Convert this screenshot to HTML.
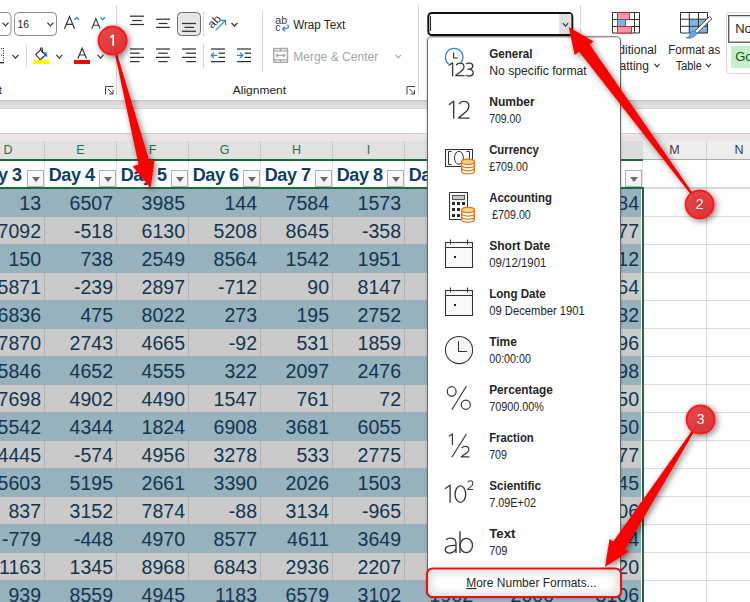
<!DOCTYPE html><html><head><meta charset="utf-8"><style>
*{margin:0;padding:0;box-sizing:border-box}
html,body{width:750px;height:602px;overflow:hidden;background:#fff;font-family:"Liberation Sans",sans-serif}
.a{position:absolute}
.sep{position:absolute;width:1px;background:#d4d4d4}
.rib{color:#262626;font-size:12px;white-space:nowrap}
.cell{position:absolute;text-align:right;font-size:19.5px;color:#0f3651;padding-right:4px;line-height:28px;white-space:nowrap;overflow:hidden}
.hd{position:absolute;top:141px;height:18px;background:#e1e1e1;border-right:1px solid #c8c8c8;color:#217346;font-size:12.5px;text-align:center;line-height:19.5px}
.th{position:absolute;top:161px;height:26px;background:#fff;border-right:1px solid #e4e4e4;color:#0f3f63;font-weight:bold;font-size:18px;line-height:28.5px;letter-spacing:-0.45px;white-space:nowrap;overflow:hidden}
.fb{position:absolute;width:17px;height:17px;border:1px solid #b3b3b3;background:linear-gradient(#fdfdfd,#eef0f3)}
.fb:after{content:"";position:absolute;left:4px;top:6px;border-left:4px solid transparent;border-right:4px solid transparent;border-top:5px solid #6b6b6b}
.mi{position:absolute;left:489px;color:#262626;white-space:nowrap}
.mt{font-weight:bold;font-size:12px;line-height:14px}
.ms{font-size:12px;line-height:14px;margin-top:3px}
</style></head><body>
<div class="a" style="left:0;top:100px;width:750px;height:9px;background:linear-gradient(#c9c4c4 0,#c9c4c4 1px,#d9d4d4 1px,#e9e5e5 8px,#d2d2d2 8px)"></div>
<div class="a" style="left:0;top:133px;width:750px;height:8px;background:linear-gradient(#d0d0d0 0,#d0d0d0 1px,#ede5e5 1px)"></div>
<div class="hd" style="left:-28px;width:73px">D</div>
<div class="hd" style="left:45px;width:72px">E</div>
<div class="hd" style="left:117px;width:72px">F</div>
<div class="hd" style="left:189px;width:72px">G</div>
<div class="hd" style="left:261px;width:72px">H</div>
<div class="hd" style="left:333px;width:72px">I</div>
<div class="hd" style="left:405px;width:72px">J</div>
<div class="hd" style="left:477px;width:72px">K</div>
<div class="hd" style="left:549px;width:94px">L</div>
<div class="a" style="left:621px;top:141px;width:22px;height:18px;background:#dcdcdc"></div>
<div class="a" style="left:643px;top:141px;width:107px;height:19px;background:#ededed;border-bottom:1px solid #ababab"></div>
<div class="a" style="left:643px;top:141px;width:64px;height:18px;border-right:1px solid #d0d0d0;color:#3a3a4a;font-size:12.5px;text-align:center;line-height:19.5px">M</div>
<div class="a" style="left:707px;top:141px;width:64px;height:18px;color:#3a3a4a;font-size:12.5px;text-align:center;line-height:19.5px">N</div>
<div class="a" style="left:0;top:159px;width:643px;height:2px;background:#1d6b3a"></div>
<div class="a" style="left:706px;top:160px;width:1px;height:442px;background:#dadada"></div>
<div class="a" style="left:643px;top:188px;width:107px;height:1px;background:#dadada"></div>
<div class="a" style="left:643px;top:216px;width:107px;height:1px;background:#dadada"></div>
<div class="a" style="left:643px;top:244px;width:107px;height:1px;background:#dadada"></div>
<div class="a" style="left:643px;top:272px;width:107px;height:1px;background:#dadada"></div>
<div class="a" style="left:643px;top:300px;width:107px;height:1px;background:#dadada"></div>
<div class="a" style="left:643px;top:328px;width:107px;height:1px;background:#dadada"></div>
<div class="a" style="left:643px;top:356px;width:107px;height:1px;background:#dadada"></div>
<div class="a" style="left:643px;top:384px;width:107px;height:1px;background:#dadada"></div>
<div class="a" style="left:643px;top:412px;width:107px;height:1px;background:#dadada"></div>
<div class="a" style="left:643px;top:440px;width:107px;height:1px;background:#dadada"></div>
<div class="a" style="left:643px;top:468px;width:107px;height:1px;background:#dadada"></div>
<div class="a" style="left:643px;top:496px;width:107px;height:1px;background:#dadada"></div>
<div class="a" style="left:643px;top:524px;width:107px;height:1px;background:#dadada"></div>
<div class="a" style="left:643px;top:552px;width:107px;height:1px;background:#dadada"></div>
<div class="a" style="left:643px;top:580px;width:107px;height:1px;background:#dadada"></div>
<div class="a" style="left:643px;top:187px;width:107px;height:1px;background:#dadada"></div>
<div class="th" style="left:-28px;width:73px;padding-left:3.8px">Day 3</div>
<div class="fb" style="left:27px;top:170px"></div>
<div class="th" style="left:45px;width:72px;padding-left:3.8px">Day 4</div>
<div class="fb" style="left:99px;top:170px"></div>
<div class="th" style="left:117px;width:72px;padding-left:3.8px">Day 5</div>
<div class="fb" style="left:171px;top:170px"></div>
<div class="th" style="left:189px;width:72px;padding-left:3.8px">Day 6</div>
<div class="fb" style="left:243px;top:170px"></div>
<div class="th" style="left:261px;width:72px;padding-left:3.8px">Day 7</div>
<div class="fb" style="left:315px;top:170px"></div>
<div class="th" style="left:333px;width:72px;padding-left:3.8px">Day 8</div>
<div class="fb" style="left:387px;top:170px"></div>
<div class="th" style="left:405px;width:72px;padding-left:3.8px">Day 9</div>
<div class="fb" style="left:459px;top:170px"></div>
<div class="th" style="left:477px;width:72px;padding-left:3.8px">Day 10</div>
<div class="fb" style="left:531px;top:170px"></div>
<div class="th" style="left:549px;width:94px;padding-left:3.8px">Day 11</div>
<div class="fb" style="left:625px;top:170px"></div>
<div class="a" style="left:0;top:187px;width:643px;height:2px;background:#1d6b3a"></div>
<div class="a" style="left:0;top:189px;width:641px;height:413px;background:#cacaca"></div><div class="a" style="left:641px;top:189px;width:1px;height:413px;background:#fff"></div>
<div class="a" style="left:0;top:189px;width:641px;height:28px;background:#97b1bd"></div>
<div class="a" style="left:44px;top:217px;width:1px;height:27px;background:#b3b3b3"></div>
<div class="a" style="left:116px;top:217px;width:1px;height:27px;background:#b3b3b3"></div>
<div class="a" style="left:188px;top:217px;width:1px;height:27px;background:#b3b3b3"></div>
<div class="a" style="left:260px;top:217px;width:1px;height:27px;background:#b3b3b3"></div>
<div class="a" style="left:332px;top:217px;width:1px;height:27px;background:#b3b3b3"></div>
<div class="a" style="left:404px;top:217px;width:1px;height:27px;background:#b3b3b3"></div>
<div class="a" style="left:476px;top:217px;width:1px;height:27px;background:#b3b3b3"></div>
<div class="a" style="left:548px;top:217px;width:1px;height:27px;background:#b3b3b3"></div>
<div class="a" style="left:0;top:244px;width:641px;height:29px;background:#97b1bd"></div>
<div class="a" style="left:44px;top:273px;width:1px;height:27px;background:#b3b3b3"></div>
<div class="a" style="left:116px;top:273px;width:1px;height:27px;background:#b3b3b3"></div>
<div class="a" style="left:188px;top:273px;width:1px;height:27px;background:#b3b3b3"></div>
<div class="a" style="left:260px;top:273px;width:1px;height:27px;background:#b3b3b3"></div>
<div class="a" style="left:332px;top:273px;width:1px;height:27px;background:#b3b3b3"></div>
<div class="a" style="left:404px;top:273px;width:1px;height:27px;background:#b3b3b3"></div>
<div class="a" style="left:476px;top:273px;width:1px;height:27px;background:#b3b3b3"></div>
<div class="a" style="left:548px;top:273px;width:1px;height:27px;background:#b3b3b3"></div>
<div class="a" style="left:0;top:300px;width:641px;height:29px;background:#97b1bd"></div>
<div class="a" style="left:44px;top:329px;width:1px;height:27px;background:#b3b3b3"></div>
<div class="a" style="left:116px;top:329px;width:1px;height:27px;background:#b3b3b3"></div>
<div class="a" style="left:188px;top:329px;width:1px;height:27px;background:#b3b3b3"></div>
<div class="a" style="left:260px;top:329px;width:1px;height:27px;background:#b3b3b3"></div>
<div class="a" style="left:332px;top:329px;width:1px;height:27px;background:#b3b3b3"></div>
<div class="a" style="left:404px;top:329px;width:1px;height:27px;background:#b3b3b3"></div>
<div class="a" style="left:476px;top:329px;width:1px;height:27px;background:#b3b3b3"></div>
<div class="a" style="left:548px;top:329px;width:1px;height:27px;background:#b3b3b3"></div>
<div class="a" style="left:0;top:356px;width:641px;height:29px;background:#97b1bd"></div>
<div class="a" style="left:44px;top:385px;width:1px;height:27px;background:#b3b3b3"></div>
<div class="a" style="left:116px;top:385px;width:1px;height:27px;background:#b3b3b3"></div>
<div class="a" style="left:188px;top:385px;width:1px;height:27px;background:#b3b3b3"></div>
<div class="a" style="left:260px;top:385px;width:1px;height:27px;background:#b3b3b3"></div>
<div class="a" style="left:332px;top:385px;width:1px;height:27px;background:#b3b3b3"></div>
<div class="a" style="left:404px;top:385px;width:1px;height:27px;background:#b3b3b3"></div>
<div class="a" style="left:476px;top:385px;width:1px;height:27px;background:#b3b3b3"></div>
<div class="a" style="left:548px;top:385px;width:1px;height:27px;background:#b3b3b3"></div>
<div class="a" style="left:0;top:412px;width:641px;height:29px;background:#97b1bd"></div>
<div class="a" style="left:44px;top:441px;width:1px;height:27px;background:#b3b3b3"></div>
<div class="a" style="left:116px;top:441px;width:1px;height:27px;background:#b3b3b3"></div>
<div class="a" style="left:188px;top:441px;width:1px;height:27px;background:#b3b3b3"></div>
<div class="a" style="left:260px;top:441px;width:1px;height:27px;background:#b3b3b3"></div>
<div class="a" style="left:332px;top:441px;width:1px;height:27px;background:#b3b3b3"></div>
<div class="a" style="left:404px;top:441px;width:1px;height:27px;background:#b3b3b3"></div>
<div class="a" style="left:476px;top:441px;width:1px;height:27px;background:#b3b3b3"></div>
<div class="a" style="left:548px;top:441px;width:1px;height:27px;background:#b3b3b3"></div>
<div class="a" style="left:0;top:468px;width:641px;height:29px;background:#97b1bd"></div>
<div class="a" style="left:44px;top:497px;width:1px;height:27px;background:#b3b3b3"></div>
<div class="a" style="left:116px;top:497px;width:1px;height:27px;background:#b3b3b3"></div>
<div class="a" style="left:188px;top:497px;width:1px;height:27px;background:#b3b3b3"></div>
<div class="a" style="left:260px;top:497px;width:1px;height:27px;background:#b3b3b3"></div>
<div class="a" style="left:332px;top:497px;width:1px;height:27px;background:#b3b3b3"></div>
<div class="a" style="left:404px;top:497px;width:1px;height:27px;background:#b3b3b3"></div>
<div class="a" style="left:476px;top:497px;width:1px;height:27px;background:#b3b3b3"></div>
<div class="a" style="left:548px;top:497px;width:1px;height:27px;background:#b3b3b3"></div>
<div class="a" style="left:0;top:524px;width:641px;height:29px;background:#97b1bd"></div>
<div class="a" style="left:44px;top:553px;width:1px;height:27px;background:#b3b3b3"></div>
<div class="a" style="left:116px;top:553px;width:1px;height:27px;background:#b3b3b3"></div>
<div class="a" style="left:188px;top:553px;width:1px;height:27px;background:#b3b3b3"></div>
<div class="a" style="left:260px;top:553px;width:1px;height:27px;background:#b3b3b3"></div>
<div class="a" style="left:332px;top:553px;width:1px;height:27px;background:#b3b3b3"></div>
<div class="a" style="left:404px;top:553px;width:1px;height:27px;background:#b3b3b3"></div>
<div class="a" style="left:476px;top:553px;width:1px;height:27px;background:#b3b3b3"></div>
<div class="a" style="left:548px;top:553px;width:1px;height:27px;background:#b3b3b3"></div>
<div class="a" style="left:0;top:580px;width:641px;height:29px;background:#97b1bd"></div>
<div class="cell" style="left:-28px;top:189px;width:73px;height:28px">13</div>
<div class="cell" style="left:45px;top:189px;width:72px;height:28px">6507</div>
<div class="cell" style="left:117px;top:189px;width:72px;height:28px">3985</div>
<div class="cell" style="left:189px;top:189px;width:72px;height:28px">144</div>
<div class="cell" style="left:261px;top:189px;width:72px;height:28px">7584</div>
<div class="cell" style="left:333px;top:189px;width:72px;height:28px">1573</div>
<div class="cell" style="left:405px;top:189px;width:72px;height:28px"></div>
<div class="cell" style="left:477px;top:189px;width:72px;height:28px"></div>
<div class="cell" style="left:549px;top:189px;width:94px;height:28px">1184</div>
<div class="cell" style="left:-28px;top:217px;width:73px;height:28px">7092</div>
<div class="cell" style="left:45px;top:217px;width:72px;height:28px">-518</div>
<div class="cell" style="left:117px;top:217px;width:72px;height:28px">6130</div>
<div class="cell" style="left:189px;top:217px;width:72px;height:28px">5208</div>
<div class="cell" style="left:261px;top:217px;width:72px;height:28px">8645</div>
<div class="cell" style="left:333px;top:217px;width:72px;height:28px">-358</div>
<div class="cell" style="left:405px;top:217px;width:72px;height:28px"></div>
<div class="cell" style="left:477px;top:217px;width:72px;height:28px"></div>
<div class="cell" style="left:549px;top:217px;width:94px;height:28px">1177</div>
<div class="cell" style="left:-28px;top:245px;width:73px;height:28px">150</div>
<div class="cell" style="left:45px;top:245px;width:72px;height:28px">738</div>
<div class="cell" style="left:117px;top:245px;width:72px;height:28px">2549</div>
<div class="cell" style="left:189px;top:245px;width:72px;height:28px">8564</div>
<div class="cell" style="left:261px;top:245px;width:72px;height:28px">1542</div>
<div class="cell" style="left:333px;top:245px;width:72px;height:28px">1951</div>
<div class="cell" style="left:405px;top:245px;width:72px;height:28px"></div>
<div class="cell" style="left:477px;top:245px;width:72px;height:28px"></div>
<div class="cell" style="left:549px;top:245px;width:94px;height:28px">1112</div>
<div class="cell" style="left:-28px;top:273px;width:73px;height:28px">5871</div>
<div class="cell" style="left:45px;top:273px;width:72px;height:28px">-239</div>
<div class="cell" style="left:117px;top:273px;width:72px;height:28px">2897</div>
<div class="cell" style="left:189px;top:273px;width:72px;height:28px">-712</div>
<div class="cell" style="left:261px;top:273px;width:72px;height:28px">90</div>
<div class="cell" style="left:333px;top:273px;width:72px;height:28px">8147</div>
<div class="cell" style="left:405px;top:273px;width:72px;height:28px"></div>
<div class="cell" style="left:477px;top:273px;width:72px;height:28px"></div>
<div class="cell" style="left:549px;top:273px;width:94px;height:28px">1164</div>
<div class="cell" style="left:-28px;top:301px;width:73px;height:28px">6836</div>
<div class="cell" style="left:45px;top:301px;width:72px;height:28px">475</div>
<div class="cell" style="left:117px;top:301px;width:72px;height:28px">8022</div>
<div class="cell" style="left:189px;top:301px;width:72px;height:28px">273</div>
<div class="cell" style="left:261px;top:301px;width:72px;height:28px">195</div>
<div class="cell" style="left:333px;top:301px;width:72px;height:28px">2752</div>
<div class="cell" style="left:405px;top:301px;width:72px;height:28px"></div>
<div class="cell" style="left:477px;top:301px;width:72px;height:28px"></div>
<div class="cell" style="left:549px;top:301px;width:94px;height:28px">1182</div>
<div class="cell" style="left:-28px;top:329px;width:73px;height:28px">7870</div>
<div class="cell" style="left:45px;top:329px;width:72px;height:28px">2743</div>
<div class="cell" style="left:117px;top:329px;width:72px;height:28px">4665</div>
<div class="cell" style="left:189px;top:329px;width:72px;height:28px">-92</div>
<div class="cell" style="left:261px;top:329px;width:72px;height:28px">531</div>
<div class="cell" style="left:333px;top:329px;width:72px;height:28px">1859</div>
<div class="cell" style="left:405px;top:329px;width:72px;height:28px"></div>
<div class="cell" style="left:477px;top:329px;width:72px;height:28px"></div>
<div class="cell" style="left:549px;top:329px;width:94px;height:28px">1196</div>
<div class="cell" style="left:-28px;top:357px;width:73px;height:28px">5846</div>
<div class="cell" style="left:45px;top:357px;width:72px;height:28px">4652</div>
<div class="cell" style="left:117px;top:357px;width:72px;height:28px">4555</div>
<div class="cell" style="left:189px;top:357px;width:72px;height:28px">322</div>
<div class="cell" style="left:261px;top:357px;width:72px;height:28px">2097</div>
<div class="cell" style="left:333px;top:357px;width:72px;height:28px">2476</div>
<div class="cell" style="left:405px;top:357px;width:72px;height:28px"></div>
<div class="cell" style="left:477px;top:357px;width:72px;height:28px"></div>
<div class="cell" style="left:549px;top:357px;width:94px;height:28px">1198</div>
<div class="cell" style="left:-28px;top:385px;width:73px;height:28px">7698</div>
<div class="cell" style="left:45px;top:385px;width:72px;height:28px">4902</div>
<div class="cell" style="left:117px;top:385px;width:72px;height:28px">4490</div>
<div class="cell" style="left:189px;top:385px;width:72px;height:28px">1547</div>
<div class="cell" style="left:261px;top:385px;width:72px;height:28px">761</div>
<div class="cell" style="left:333px;top:385px;width:72px;height:28px">72</div>
<div class="cell" style="left:405px;top:385px;width:72px;height:28px"></div>
<div class="cell" style="left:477px;top:385px;width:72px;height:28px"></div>
<div class="cell" style="left:549px;top:385px;width:94px;height:28px">1150</div>
<div class="cell" style="left:-28px;top:413px;width:73px;height:28px">5542</div>
<div class="cell" style="left:45px;top:413px;width:72px;height:28px">4344</div>
<div class="cell" style="left:117px;top:413px;width:72px;height:28px">1824</div>
<div class="cell" style="left:189px;top:413px;width:72px;height:28px">6908</div>
<div class="cell" style="left:261px;top:413px;width:72px;height:28px">3681</div>
<div class="cell" style="left:333px;top:413px;width:72px;height:28px">6055</div>
<div class="cell" style="left:405px;top:413px;width:72px;height:28px"></div>
<div class="cell" style="left:477px;top:413px;width:72px;height:28px"></div>
<div class="cell" style="left:549px;top:413px;width:94px;height:28px">1150</div>
<div class="cell" style="left:-28px;top:441px;width:73px;height:28px">4445</div>
<div class="cell" style="left:45px;top:441px;width:72px;height:28px">-574</div>
<div class="cell" style="left:117px;top:441px;width:72px;height:28px">4956</div>
<div class="cell" style="left:189px;top:441px;width:72px;height:28px">3278</div>
<div class="cell" style="left:261px;top:441px;width:72px;height:28px">533</div>
<div class="cell" style="left:333px;top:441px;width:72px;height:28px">2775</div>
<div class="cell" style="left:405px;top:441px;width:72px;height:28px"></div>
<div class="cell" style="left:477px;top:441px;width:72px;height:28px"></div>
<div class="cell" style="left:549px;top:441px;width:94px;height:28px">1177</div>
<div class="cell" style="left:-28px;top:469px;width:73px;height:28px">5603</div>
<div class="cell" style="left:45px;top:469px;width:72px;height:28px">5195</div>
<div class="cell" style="left:117px;top:469px;width:72px;height:28px">2661</div>
<div class="cell" style="left:189px;top:469px;width:72px;height:28px">3390</div>
<div class="cell" style="left:261px;top:469px;width:72px;height:28px">2026</div>
<div class="cell" style="left:333px;top:469px;width:72px;height:28px">1503</div>
<div class="cell" style="left:405px;top:469px;width:72px;height:28px"></div>
<div class="cell" style="left:477px;top:469px;width:72px;height:28px"></div>
<div class="cell" style="left:549px;top:469px;width:94px;height:28px">1145</div>
<div class="cell" style="left:-28px;top:497px;width:73px;height:28px">837</div>
<div class="cell" style="left:45px;top:497px;width:72px;height:28px">3152</div>
<div class="cell" style="left:117px;top:497px;width:72px;height:28px">7874</div>
<div class="cell" style="left:189px;top:497px;width:72px;height:28px">-88</div>
<div class="cell" style="left:261px;top:497px;width:72px;height:28px">3134</div>
<div class="cell" style="left:333px;top:497px;width:72px;height:28px">-965</div>
<div class="cell" style="left:405px;top:497px;width:72px;height:28px"></div>
<div class="cell" style="left:477px;top:497px;width:72px;height:28px"></div>
<div class="cell" style="left:549px;top:497px;width:94px;height:28px">1106</div>
<div class="cell" style="left:-28px;top:525px;width:73px;height:28px">-779</div>
<div class="cell" style="left:45px;top:525px;width:72px;height:28px">-448</div>
<div class="cell" style="left:117px;top:525px;width:72px;height:28px">4970</div>
<div class="cell" style="left:189px;top:525px;width:72px;height:28px">8577</div>
<div class="cell" style="left:261px;top:525px;width:72px;height:28px">4611</div>
<div class="cell" style="left:333px;top:525px;width:72px;height:28px">3649</div>
<div class="cell" style="left:405px;top:525px;width:72px;height:28px"></div>
<div class="cell" style="left:477px;top:525px;width:72px;height:28px"></div>
<div class="cell" style="left:549px;top:525px;width:94px;height:28px">1124</div>
<div class="cell" style="left:-28px;top:553px;width:73px;height:28px">1163</div>
<div class="cell" style="left:45px;top:553px;width:72px;height:28px">1345</div>
<div class="cell" style="left:117px;top:553px;width:72px;height:28px">8968</div>
<div class="cell" style="left:189px;top:553px;width:72px;height:28px">6843</div>
<div class="cell" style="left:261px;top:553px;width:72px;height:28px">2936</div>
<div class="cell" style="left:333px;top:553px;width:72px;height:28px">2207</div>
<div class="cell" style="left:405px;top:553px;width:72px;height:28px"></div>
<div class="cell" style="left:477px;top:553px;width:72px;height:28px"></div>
<div class="cell" style="left:549px;top:553px;width:94px;height:28px">1120</div>
<div class="cell" style="left:-28px;top:581px;width:73px;height:28px">939</div>
<div class="cell" style="left:45px;top:581px;width:72px;height:28px">8559</div>
<div class="cell" style="left:117px;top:581px;width:72px;height:28px">4945</div>
<div class="cell" style="left:189px;top:581px;width:72px;height:28px">1183</div>
<div class="cell" style="left:261px;top:581px;width:72px;height:28px">6579</div>
<div class="cell" style="left:333px;top:581px;width:72px;height:28px">3102</div>
<div class="cell" style="left:405px;top:581px;width:72px;height:28px">1962</div>
<div class="cell" style="left:477px;top:581px;width:72px;height:28px"></div>
<div class="cell" style="left:549px;top:581px;width:94px;height:28px">3106</div>
<div class="cell" style="left:480px;top:581px;width:78px;height:28px">2000</div>
<div class="a" style="left:642px;top:187px;width:2px;height:415px;background:#1d6b3a"></div>
<svg class="a" style="left:0;top:0" width="750" height="100" viewBox="0 0 750 100" font-family="Liberation Sans, sans-serif">
<rect x="116" y="5" width="1" height="90" fill="#d6d6d6"/>
<rect x="203" y="12" width="1" height="24" fill="#d6d6d6"/>
<rect x="203" y="44" width="1" height="24" fill="#d6d6d6"/>
<rect x="262" y="11" width="1" height="61" fill="#d6d6d6"/>
<rect x="418" y="5" width="1" height="90" fill="#d6d6d6"/>
<rect x="580" y="5" width="1" height="90" fill="#d6d6d6"/>
<rect x="26" y="45" width="1" height="22" fill="#d6d6d6"/>
<rect x="-20" y="12.5" width="31" height="23" rx="4" fill="#fff" stroke="#8c8c8c" stroke-width="1"/>
<path d="M2.5 22.599999999999998 L5.5 25.8 L8.5 22.599999999999998" fill="none" stroke="#333" stroke-width="1.2"/>
<rect x="14.5" y="12.5" width="42" height="23" rx="4" fill="#fff" stroke="#8c8c8c" stroke-width="1"/>
<text x="17.5" y="27.8" font-size="11.5" fill="#262626" font-weight="normal" textLength="11.5" lengthAdjust="spacingAndGlyphs" >16</text>
<path d="M47.4 22.599999999999998 L50.4 25.8 L53.4 22.599999999999998" fill="none" stroke="#333" stroke-width="1.2"/>
<path d="M64.5 28.7 L69.5 16.6 L74.5 28.7 M66.4 24.4 H72.6" fill="none" stroke="#333" stroke-width="1.15"/>
<path d="M74.3 19.9 L76.7 17.5 L79.1 19.9" fill="none" stroke="#2b88d8" stroke-width="1.3"/>
<path d="M91.7 28.7 L95.9 18.6 L100.1 28.7 M93.3 25.3 H98.5" fill="none" stroke="#333" stroke-width="1.1"/>
<path d="M100.4 17.2 L102.7 19.5 L105 17.2" fill="none" stroke="#2b88d8" stroke-width="1.3"/>
<path d="M3.5 48 V61.5" fill="none" stroke="#333" stroke-width="1.1" stroke-dasharray="1.1 1.2"/>
<rect x="1" y="48" width="1.1" height="1.1" fill="#333"/><rect x="1" y="54.6" width="1.1" height="1.1" fill="#333"/>
<rect x="0" y="62" width="4" height="1.3" fill="#222"/>
<path d="M12.5 54.9 L15.5 58.1 L18.5 54.9" fill="none" stroke="#333" stroke-width="1.2"/>
<path d="M35.7 54.5 L40.4 49.8 L45.6 55 L40.2 59.8 Z" fill="#fff" stroke="#333" stroke-width="1.15" stroke-linejoin="round"/>
<path d="M40.6 50 V48.6 Q41.3 47.3 42.2 48.4 L42.6 53" fill="none" stroke="#333" stroke-width="1.1"/>
<path d="M44.3 52.6 Q46.8 51.8 46.6 56.8" fill="none" stroke="#2b88d8" stroke-width="1.5"/>
<rect x="33" y="60" width="16" height="4" fill="#ffff00"/>
<path d="M56.3 54.9 L59.3 58.1 L62.3 54.9" fill="none" stroke="#333" stroke-width="1.2"/>
<path d="M77.9 58.6 L82.2 48.3 L86.5 58.6 M79.5 55 H84.9" fill="none" stroke="#333" stroke-width="1.2"/>
<rect x="74" y="60" width="16" height="4" fill="#ff0000"/>
<path d="M97.5 54.9 L100.5 58.1 L103.5 54.9" fill="none" stroke="#333" stroke-width="1.2"/>
<text x="-1.3" y="93.8" font-size="11" fill="#262626" font-weight="normal" >t</text>
<path d="M105.5 94.5 V86.5 H113.5" fill="none" stroke="#444" stroke-width="1"/><path d="M108.0 89.0 L113.0 94.0 M113.0 90.0 V94.0 H109.0" fill="none" stroke="#444" stroke-width="1"/>
<path d="M407 94.5 V86.5 H415" fill="none" stroke="#444" stroke-width="1"/><path d="M409.5 89.0 L414.5 94.0 M414.5 90.0 V94.0 H410.5" fill="none" stroke="#444" stroke-width="1"/>
<line x1="130" y1="16.2" x2="144" y2="16.2" stroke="#333" stroke-width="1.25"/><line x1="132.3" y1="20.5" x2="141.9" y2="20.5" stroke="#333" stroke-width="1.25"/><line x1="130" y1="24.5" x2="144" y2="24.5" stroke="#333" stroke-width="1.25"/>
<line x1="156" y1="19.2" x2="170" y2="19.2" stroke="#333" stroke-width="1.25"/><line x1="158.5" y1="23.5" x2="167.5" y2="23.5" stroke="#333" stroke-width="1.25"/><line x1="156" y1="27.4" x2="170" y2="27.4" stroke="#333" stroke-width="1.25"/>
<rect x="177.5" y="12.5" width="23" height="23" rx="4" fill="#e6e6e6" stroke="#707070" stroke-width="1"/>
<line x1="182" y1="23.5" x2="196" y2="23.5" stroke="#333" stroke-width="1.25"/><line x1="184.5" y1="27.4" x2="194" y2="27.4" stroke="#333" stroke-width="1.25"/><line x1="182" y1="31.3" x2="196" y2="31.3" stroke="#333" stroke-width="1.25"/>
<g transform="translate(214.3 21.3) rotate(-45)"><text x="-7" y="3.9" font-size="11.5" fill="#333" font-weight="normal" textLength="13.5" lengthAdjust="spacingAndGlyphs" >ab</text></g>
<path d="M215.6 30.3 L225.4 20.5 M220.8 20.3 H225.6 V25.1" fill="none" stroke="#2b88d8" stroke-width="1.2"/>
<path d="M231.5 22.799999999999997 L234.5 26.0 L237.5 22.799999999999997" fill="none" stroke="#333" stroke-width="1.2"/>
<line x1="130" y1="49" x2="144" y2="49" stroke="#333" stroke-width="1.25"/><line x1="156" y1="49" x2="170" y2="49" stroke="#333" stroke-width="1.25"/><line x1="182" y1="49" x2="196" y2="49" stroke="#333" stroke-width="1.25"/>
<line x1="130" y1="53.2" x2="139.6" y2="53.2" stroke="#333" stroke-width="1.25"/><line x1="158.3" y1="53.2" x2="167.7" y2="53.2" stroke="#333" stroke-width="1.25"/><line x1="186.2" y1="53.2" x2="196" y2="53.2" stroke="#333" stroke-width="1.25"/>
<line x1="130" y1="57.4" x2="144" y2="57.4" stroke="#333" stroke-width="1.25"/><line x1="156" y1="57.4" x2="170" y2="57.4" stroke="#333" stroke-width="1.25"/><line x1="182" y1="57.4" x2="196" y2="57.4" stroke="#333" stroke-width="1.25"/>
<line x1="130" y1="61.6" x2="139.6" y2="61.6" stroke="#333" stroke-width="1.25"/><line x1="158.3" y1="61.6" x2="167.7" y2="61.6" stroke="#333" stroke-width="1.25"/><line x1="186.2" y1="61.6" x2="196" y2="61.6" stroke="#333" stroke-width="1.25"/>
<line x1="211" y1="49" x2="225" y2="49" stroke="#333" stroke-width="1.25"/><line x1="218.6" y1="53.2" x2="225" y2="53.2" stroke="#333" stroke-width="1.25"/><line x1="218.6" y1="57.4" x2="225" y2="57.4" stroke="#333" stroke-width="1.25"/><line x1="211" y1="61.6" x2="225" y2="61.6" stroke="#333" stroke-width="1.25"/>
<path d="M211.6 55.3 H217.2 M214 52.6 L211.3 55.3 L214 58" fill="none" stroke="#2b88d8" stroke-width="1.3"/>
<line x1="237" y1="49" x2="251" y2="49" stroke="#333" stroke-width="1.25"/><line x1="244.6" y1="53.2" x2="251" y2="53.2" stroke="#333" stroke-width="1.25"/><line x1="244.6" y1="57.4" x2="251" y2="57.4" stroke="#333" stroke-width="1.25"/><line x1="237" y1="61.6" x2="251" y2="61.6" stroke="#333" stroke-width="1.25"/>
<path d="M237 55.3 H242.6 M240 52.6 L242.7 55.3 L240 58" fill="none" stroke="#2b88d8" stroke-width="1.3"/>
<text x="275.2" y="23.6" font-size="10.3" fill="#3a3a3a" font-weight="normal" textLength="12" lengthAdjust="spacingAndGlyphs" >ab</text>
<text x="275.2" y="31.1" font-size="10.3" fill="#3a3a3a" font-weight="normal" textLength="5.2" lengthAdjust="spacingAndGlyphs" >c</text>
<path d="M287.6 24.5 Q290.5 29 283 29 M285 26.8 L282.6 29 L285 31.2" fill="none" stroke="#2b88d8" stroke-width="1.2"/>
<text x="293.2" y="28.8" font-size="12" fill="#262626" font-weight="normal" textLength="52" lengthAdjust="spacingAndGlyphs" >Wrap Text</text>
<rect x="273.7" y="48.5" width="13.8" height="13.8" fill="none" stroke="#a8a8a8" stroke-width="1.4"/>
<line x1="273.7" y1="51" x2="287.5" y2="51" stroke="#a8a8a8" stroke-width="1.3"/><line x1="273.7" y1="59.8" x2="287.5" y2="59.8" stroke="#a8a8a8" stroke-width="1.3"/><line x1="280.6" y1="48.5" x2="280.6" y2="51" stroke="#a8a8a8" stroke-width="1.3"/><line x1="280.6" y1="59.8" x2="280.6" y2="62.3" stroke="#a8a8a8" stroke-width="1.3"/>
<path d="M276.2 55.4 H285 M278 53.6 L276.2 55.4 L278 57.2 M283.2 53.6 L285 55.4 L283.2 57.2" fill="none" stroke="#a8a8a8" stroke-width="1.2"/>
<text x="293.2" y="61" font-size="12" fill="#a6a6a6" font-weight="normal" textLength="85" lengthAdjust="spacingAndGlyphs" >Merge &amp; Center</text>
<path d="M395.55 54.9 L398.3 57.9 L401.05 54.9" fill="none" stroke="#a6a6a6" stroke-width="1.1"/>
<text x="232.8" y="93.8" font-size="11" fill="#262626" font-weight="normal" textLength="53.3" lengthAdjust="spacingAndGlyphs" >Alignment</text>
<rect x="428.3" y="13" width="144" height="22" rx="3.5" fill="#fff" stroke="#111" stroke-width="2"/>
<rect x="559.2" y="14" width="12" height="20" fill="#e0e0e0"/>
<path d="M562.9 23.1 L565.5 26.1 L568.1 23.1" fill="none" stroke="#333" stroke-width="1.1"/>
<rect x="430" y="16" width="1" height="15" fill="#222"/>
<path d="M612.5 12.5 H639.5 V33 H612.5 Z M612.5 19.5 H639.5 M612.5 26.5 H639.5 M617.5 12.5 V33 M634.5 12.5 V33" fill="#fff" stroke="#333" stroke-width="1"/>
<rect x="617.5" y="12.5" width="12" height="7" fill="#f59aa3" stroke="#e0202a" stroke-width="1"/>
<rect x="617.5" y="19.5" width="8" height="7" fill="#7fb5e6" stroke="#1f6fbf" stroke-width="1"/>
<rect x="617.5" y="26.5" width="14" height="6.5" fill="#f59aa3" stroke="#e0202a" stroke-width="1"/>
<text x="611.6" y="54" font-size="12" fill="#262626" font-weight="normal" textLength="45" lengthAdjust="spacingAndGlyphs" >nditional</text>
<text x="609.5" y="70" font-size="12" fill="#262626" font-weight="normal" textLength="39.5" lengthAdjust="spacingAndGlyphs" >matting</text>
<path d="M654.5 63.8 L657 66.8 L659.5 63.8" fill="none" stroke="#333" stroke-width="1.1"/>
<rect x="689.3" y="19.2" width="18.3" height="14.1" fill="#7fb5e6"/>
<path d="M680.5 12.5 H707.5 V33 H680.5 Z M680.5 19.2 H707.5 M680.5 26.3 H707.5 M689.3 12.5 V33 M698.5 12.5 V33" fill="none" stroke="#333" stroke-width="1"/>
<path d="M709.5 16.5 L711.8 18.8 L697 33.5 L694.7 31.2 Z" fill="#fff" stroke="#444" stroke-width="1"/>
<path d="M694.5 31 Q690 31 689.8 35 Q689 37.5 686 37.8 Q692.5 39.5 696.8 33.8 Z" fill="#6aa9e0" stroke="#2f7fcf" stroke-width="0.8"/>
<text x="668.2" y="54" font-size="12" fill="#262626" font-weight="normal" textLength="52" lengthAdjust="spacingAndGlyphs" >Format as</text>
<text x="675.8" y="70" font-size="12" fill="#262626" font-weight="normal" textLength="26" lengthAdjust="spacingAndGlyphs" >Table</text>
<path d="M706.0 63.8 L708.5 66.8 L711.0 63.8" fill="none" stroke="#333" stroke-width="1.1"/>
<rect x="726.5" y="12.5" width="40" height="61" rx="3.5" fill="#fff" stroke="#d4d4d4" stroke-width="1"/>
<rect x="728.7" y="15.6" width="40" height="26.6" fill="#fff" stroke="#555" stroke-width="1.3"/>
<text x="735.2" y="32.6" font-size="13" fill="#1f1f1f" font-weight="normal" >Normal</text>
<rect x="731" y="46" width="30" height="22" fill="#c6efce"/>
<text x="735.2" y="60.8" font-size="13" fill="#006100" font-weight="normal" >Good</text>
</svg>
<svg class="a" style="left:0;top:0" width="750" height="602" viewBox="0 0 750 602" font-family="Liberation Sans, sans-serif">
<defs><filter id="sh" x="-20%" y="-20%" width="140%" height="140%"><feGaussianBlur in="SourceAlpha" stdDeviation="3"/><feOffset dx="2" dy="2"/><feComponentTransfer><feFuncA type="linear" slope="0.5"/></feComponentTransfer><feMerge><feMergeNode/><feMergeNode in="SourceGraphic"/></feMerge></filter><filter id="psh" x="-10%" y="-10%" width="120%" height="120%"><feGaussianBlur in="SourceAlpha" stdDeviation="1.5"/><feOffset dx="0" dy="1"/><feComponentTransfer><feFuncA type="linear" slope="0.25"/></feComponentTransfer><feMerge><feMergeNode/><feMergeNode in="SourceGraphic"/></feMerge></filter></defs>
<path d="M427.5 594 V41 Q427.5 36.8 431.5 36.8 H616.5 Q620.5 36.8 620.5 41 V594 Z" fill="#fff" stroke="#6a6a6a" stroke-width="1" filter="url(#psh)"/>
<text x="489.2" y="57.9" font-size="12" fill="#262626" font-weight="bold" textLength="43.3" lengthAdjust="spacingAndGlyphs" >General</text>
<text x="489.2" y="74.9" font-size="12" fill="#262626" font-weight="normal" textLength="97.5" lengthAdjust="spacingAndGlyphs" >No specific format</text>
<text x="489.2" y="105.9" font-size="12" fill="#262626" font-weight="bold" textLength="45.5" lengthAdjust="spacingAndGlyphs" >Number</text>
<text x="489.2" y="122.9" font-size="12" fill="#262626" font-weight="normal" textLength="31.900000000000002" lengthAdjust="spacingAndGlyphs" >709.00</text>
<text x="489.2" y="153.9" font-size="12" fill="#262626" font-weight="bold" textLength="49.599999999999994" lengthAdjust="spacingAndGlyphs" >Currency</text>
<text x="489.2" y="170.9" font-size="12" fill="#262626" font-weight="normal" textLength="38.699999999999996" lengthAdjust="spacingAndGlyphs" >£709.00</text>
<text x="489.2" y="201.9" font-size="12" fill="#262626" font-weight="bold" textLength="62.699999999999996" lengthAdjust="spacingAndGlyphs" >Accounting</text>
<text x="492.1" y="218.9" font-size="12" fill="#262626" font-weight="normal" textLength="38.699999999999996" lengthAdjust="spacingAndGlyphs" >£709.00</text>
<text x="489.2" y="249.9" font-size="12" fill="#262626" font-weight="bold" textLength="60.9" lengthAdjust="spacingAndGlyphs" >Short Date</text>
<text x="489.2" y="266.9" font-size="12" fill="#262626" font-weight="normal" textLength="57.199999999999996" lengthAdjust="spacingAndGlyphs" >09/12/1901</text>
<text x="489.2" y="297.9" font-size="12" fill="#262626" font-weight="bold" textLength="56.599999999999994" lengthAdjust="spacingAndGlyphs" >Long Date</text>
<text x="489.2" y="314.9" font-size="12" fill="#262626" font-weight="normal" textLength="95.6" lengthAdjust="spacingAndGlyphs" >09 December 1901</text>
<text x="489.2" y="345.9" font-size="12" fill="#262626" font-weight="bold" textLength="27.7" lengthAdjust="spacingAndGlyphs" >Time</text>
<text x="489.2" y="362.9" font-size="12" fill="#262626" font-weight="normal" textLength="41.8" lengthAdjust="spacingAndGlyphs" >00:00:00</text>
<text x="489.2" y="393.9" font-size="12" fill="#262626" font-weight="bold" textLength="63.599999999999994" lengthAdjust="spacingAndGlyphs" >Percentage</text>
<text x="489.2" y="410.9" font-size="12" fill="#262626" font-weight="normal" textLength="54.8" lengthAdjust="spacingAndGlyphs" >70900.00%</text>
<text x="489.2" y="441.9" font-size="12" fill="#262626" font-weight="bold" textLength="44.5" lengthAdjust="spacingAndGlyphs" >Fraction</text>
<text x="489.2" y="458.9" font-size="12" fill="#262626" font-weight="normal" textLength="17.8" lengthAdjust="spacingAndGlyphs" >709</text>
<text x="489.2" y="489.9" font-size="12" fill="#262626" font-weight="bold" textLength="51.9" lengthAdjust="spacingAndGlyphs" >Scientific</text>
<text x="489.2" y="506.9" font-size="12" fill="#262626" font-weight="normal" textLength="46.8" lengthAdjust="spacingAndGlyphs" >7.09E+02</text>
<text x="489.2" y="537.9" font-size="12" fill="#262626" font-weight="bold" textLength="26.3" lengthAdjust="spacingAndGlyphs" >Text</text>
<text x="489.2" y="554.9" font-size="12" fill="#262626" font-weight="normal" textLength="18.2" lengthAdjust="spacingAndGlyphs" >709</text>
<path d="M448.6 64 A8.8 8.8 0 1 1 461.1 62.6" fill="none" stroke="#2b88d8" stroke-width="1.3"/>
<path d="M453.6 52.6 V58 H457.8" fill="none" stroke="#333" stroke-width="1.1"/>
<path d="M448.6 65.56 L452.6 62.9 V76.2" fill="none" stroke="#3a3a3a" stroke-width="1.3" stroke-linejoin="round"/><path d="M456.14000000000004 65.02799999999999 C457.85 62.9 460.1 62.766999999999996 462.08000000000004 63.432 C464.78000000000003 64.496 464.42 68.486 462.35 70.348 L455.78000000000003 75.55 H464.6" fill="none" stroke="#3a3a3a" stroke-width="1.3" stroke-linejoin="round"/><path d="M465.99 63.964 C467.94 62.501 473.01000000000005 62.634 472.776 66.225 C472.62 68.486 470.28000000000003 69.151 467.94 69.151 C471.45000000000005 69.151 473.55600000000004 70.88 473.244 72.875 C473.01000000000005 76.466 467.94 76.599 465.6 75.003" fill="none" stroke="#3a3a3a" stroke-width="1.3" stroke-linejoin="round"/>
<path d="M448.9 104.72 L453.7 101.2 V118.80000000000001" fill="none" stroke="#3a3a3a" stroke-width="1.35" stroke-linejoin="round"/><path d="M458.978 104.016 C461.125 101.2 463.95 101.024 466.43600000000004 101.904 C469.826 103.312 469.374 108.592 466.77500000000003 111.05600000000001 L458.526 118.12500000000001 H469.6" fill="none" stroke="#3a3a3a" stroke-width="1.35" stroke-linejoin="round"/>
<rect x="445.5" y="149.5" width="27" height="17" fill="#fafafa" stroke="#333" stroke-width="1"/>
<path d="M451.5 151.5 H448.5 V164.5 H451.5 M466.5 151.5 H469.5 V164.5 H466.5" fill="none" stroke="#333" stroke-width="1"/>
<ellipse cx="458.9" cy="157.8" rx="4.4" ry="6.5" fill="none" stroke="#333" stroke-width="1"/>
<path d="M461.6 161.8 V171.2 A6.4 2.7 0 0 0 474.4 171.2 V161.8 Z" fill="#fff" stroke="#e0761a" stroke-width="1.25"/><path d="M461.6 165 A6.4 2.7 0 0 0 474.4 165 M461.6 168.1 A6.4 2.7 0 0 0 474.4 168.1" fill="none" stroke="#e0761a" stroke-width="1.25"/><ellipse cx="468.0" cy="161.8" rx="6.4" ry="2.7" fill="#f9d27e" stroke="#e0761a" stroke-width="1.25"/>
<rect x="449.5" y="192.5" width="18" height="27" fill="#fafafa" stroke="#333" stroke-width="1"/>
<rect x="452.5" y="195.5" width="12" height="4" fill="#c9c9c9" stroke="#555" stroke-width="1"/>
<rect x="452" y="202" width="3" height="3" fill="#2a2a2a"/>
<rect x="457" y="202" width="3" height="3" fill="#2a2a2a"/>
<rect x="462" y="202" width="3" height="3" fill="#2a2a2a"/>
<rect x="452" y="208" width="3" height="3" fill="#2a2a2a"/>
<rect x="457" y="208" width="3" height="3" fill="#2a2a2a"/>
<rect x="462" y="208" width="3" height="3" fill="#2a2a2a"/>
<rect x="452" y="214" width="3" height="3" fill="#2a2a2a"/>
<rect x="457" y="214" width="3" height="3" fill="#2a2a2a"/>
<rect x="462" y="214" width="3" height="3" fill="#2a2a2a"/>
<path d="M461.6 210.10000000000002 V219.5 A6.4 2.7 0 0 0 474.4 219.5 V210.10000000000002 Z" fill="#fff" stroke="#e0761a" stroke-width="1.25"/><path d="M461.6 213.3 A6.4 2.7 0 0 0 474.4 213.3 M461.6 216.4 A6.4 2.7 0 0 0 474.4 216.4" fill="none" stroke="#e0761a" stroke-width="1.25"/><ellipse cx="468.0" cy="210.10000000000002" rx="6.4" ry="2.7" fill="#f9d27e" stroke="#e0761a" stroke-width="1.25"/>
<rect x="445.5" y="242.5" width="27" height="25" fill="#f9f9f9" stroke="#333" stroke-width="1.05"/><path d="M445.5 247.5 H472.5 M450.5 239.5 V244.5 M467.5 239.5 V244.5" fill="none" stroke="#333" stroke-width="1.05"/><rect x="454" y="256.0" width="2" height="2" fill="#222"/>
<rect x="445.5" y="290.5" width="27" height="25" fill="#f9f9f9" stroke="#333" stroke-width="1.05"/><path d="M445.5 295.5 H472.5 M450.5 287.5 V292.5 M467.5 287.5 V292.5" fill="none" stroke="#333" stroke-width="1.05"/><rect x="454" y="304.0" width="2" height="2" fill="#222"/>
<circle cx="459" cy="350" r="13.6" fill="#f9f9f9" stroke="#333" stroke-width="1.05"/>
<path d="M458.5 341 V351.5 H467" fill="none" stroke="#333" stroke-width="1.05"/>
<ellipse cx="451.7" cy="391.4" rx="4.4" ry="4.7" fill="none" stroke="#3a3a3a" stroke-width="1.2"/>
<ellipse cx="465.8" cy="404.7" rx="4.5" ry="4.6" fill="none" stroke="#3a3a3a" stroke-width="1.2"/>
<line x1="466.4" y1="386.2" x2="451.8" y2="409.7" stroke="#3a3a3a" stroke-width="1.2"/>
<path d="M448.9 436.2 L452.4 434 V445.3" fill="none" stroke="#3a3a3a" stroke-width="1.2"/>
<line x1="466.4" y1="434" x2="451.8" y2="457.2" stroke="#3a3a3a" stroke-width="1.2"/>
<path d="M461.692 447.99199999999996 C463.25 446.2 465.3 446.08799999999997 467.104 446.64799999999997 C469.56399999999996 447.544 469.236 450.904 467.34999999999997 452.472 L461.364 456.79999999999995 H469.4" fill="none" stroke="#3a3a3a" stroke-width="1.2" stroke-linejoin="round"/>
<path d="M444.9 488.71999999999997 L450.09999999999997 485.2 V502.8" fill="none" stroke="#3a3a3a" stroke-width="1.35" stroke-linejoin="round"/><ellipse cx="460.4" cy="494.15" rx="5.325" ry="8.274999999999999" fill="none" stroke="#3a3a3a" stroke-width="1.35"/>
<path d="M467.56 482.204 C468.7 480.7 470.2 480.606 471.52 481.07599999999996 C473.32 481.828 473.08 484.64799999999997 471.7 485.964 L467.32 489.575 H473.2" fill="none" stroke="#3a3a3a" stroke-width="1.05" stroke-linejoin="round"/>
<path d="M446 539.8 C448 537.6 453.5 537.4 455.3 540.2 C456 541.3 456 542.5 456 544 V553 M456 545.4 C452 545.2 445.3 545.6 445.3 549.4 C445.3 552.3 448 553.3 450.3 553 C453.2 552.7 455.4 550.5 456 548.2" fill="none" stroke="#3a3a3a" stroke-width="1.35"/><path d="M460 531.3 V553" stroke="#3a3a3a" stroke-width="1.4"/><ellipse cx="466.3" cy="545.5" rx="6.2" ry="7.1" fill="none" stroke="#3a3a3a" stroke-width="1.35"/>
<defs><filter id="ib" x="-10%" y="-50%" width="120%" height="200%"><feGaussianBlur stdDeviation="3"/></filter><clipPath id="bc"><rect x="427" y="568.5" width="194" height="28.5" rx="5.5"/></clipPath></defs>
<rect x="427" y="568.5" width="194" height="28.5" rx="5.5" fill="#e4e4e4" filter="url(#psh)"/>
<g clip-path="url(#bc)"><rect x="433" y="574" width="182" height="17.5" rx="3" fill="#fff" filter="url(#ib)"/></g>
<rect x="427" y="568.5" width="194" height="28.5" rx="5.5" fill="none" stroke="#f01010" stroke-width="2.1"/>
<text x="466.2" y="586.6" font-size="12" fill="#262626" font-weight="normal" textLength="130.5" lengthAdjust="spacingAndGlyphs" >More Number Formats...</text>
<rect x="466.4" y="588" width="10.2" height="1.1" fill="#262626"/>
<defs><linearGradient id="bg" x1="0" y1="0" x2="1" y2="1"><stop offset="0" stop-color="#e9403f" stop-opacity="0.92"/><stop offset="1" stop-color="#dd2c32" stop-opacity="0.92"/></linearGradient></defs>
<g filter="url(#sh)">
<path d="M112.10 40.60 L138.25 163.15 L139.76 170.00 L152.06 170.00 L150.05 163.15 L113.10 40.60 Z" fill="#ff0000"/><path d="M150.6 188.2 L132.6 166.3 L154.6 160 Z" fill="#ff0000"/>
<path d="M698.60 204.50 L576.44 48.15 L572.39 43.00 L588.79 43.00 L592.34 48.15 L700.60 204.50 Z" fill="#ff0000"/><path d="M568.8 27 L574.6 54.9 L593.7 41.4 Z" fill="#ff0000"/>
<path d="M699.85 419.60 L610.49 545.35 L607.27 550.00 L624.67 550.00 L627.49 545.35 L701.35 419.60 Z" fill="#ff0000"/><path d="M605 566.9 L609.5 538.9 L628.9 551.8 Z" fill="#ff0000"/>
</g>
<g filter="url(#sh)"><circle cx="112.6" cy="40.6" r="14" fill="url(#bg)" stroke="#ff1a1a" stroke-width="2"/><path d="M110.3 37.4 L113.19999999999999 35.2 V45.800000000000004" fill="none" stroke="#fff" stroke-width="1.7" stroke-linejoin="round"/><circle cx="699.6" cy="204.5" r="14" fill="url(#bg)" stroke="#ff1a1a" stroke-width="2"/><text x="699.6" y="209.2" font-size="14.5" fill="#fff" text-anchor="middle">2</text><circle cx="700.6" cy="419.6" r="14" fill="url(#bg)" stroke="#ff1a1a" stroke-width="2"/><text x="700.6" y="424.3" font-size="14.5" fill="#fff" text-anchor="middle">3</text></g>
</svg>
</body></html>
